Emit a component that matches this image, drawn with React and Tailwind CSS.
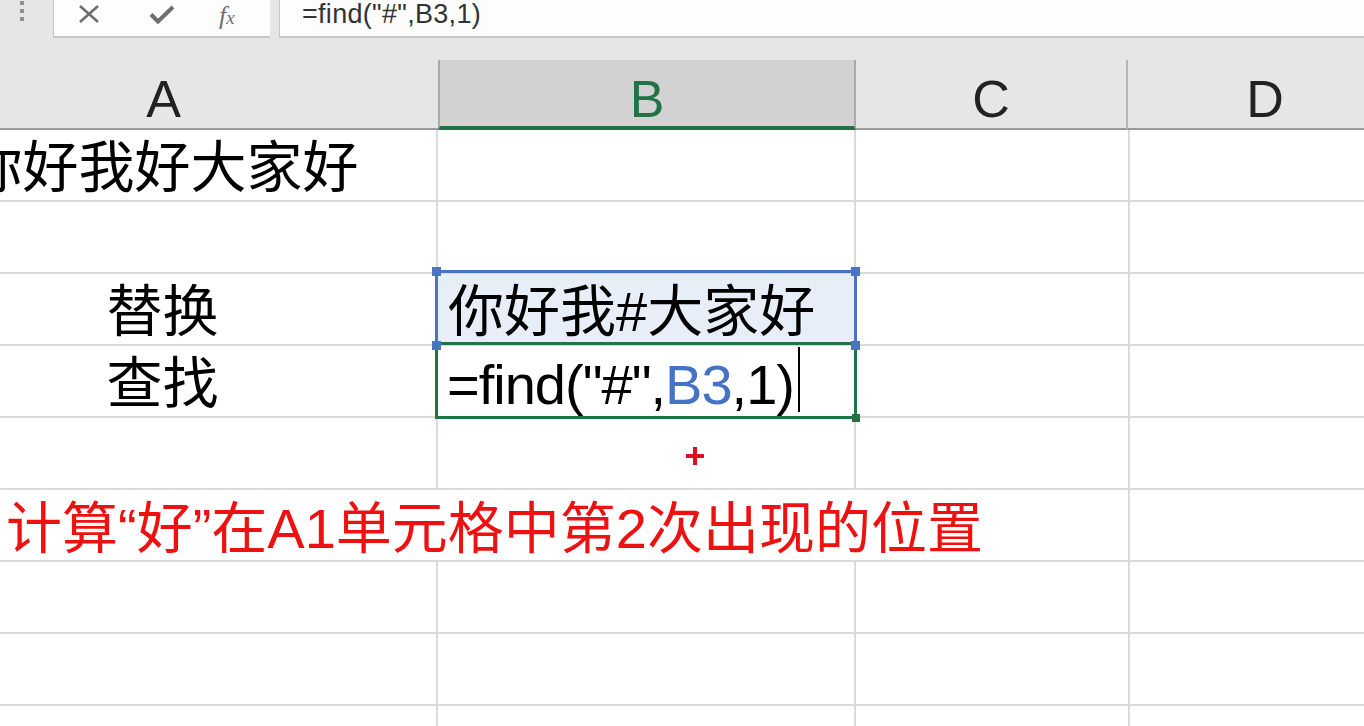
import React from "react";

const GRID = "border-[#dadada]";

function Cell({ w, className = "", children }) {
  return (
    <div
      className={`flex h-[72px] shrink-0 border-b-2 border-r-2 ${GRID} ${w} ${className}`}
    >
      {children}
    </div>
  );
}

function EmptyRow() {
  return (
    <div className="flex">
      <Cell w="w-[549px]" />
      <Cell w="w-[418px]" />
      <Cell w="w-[274px]" />
      <Cell w="w-[274px]" />
    </div>
  );
}

export default function App() {
  return (
    <div className="relative h-[726px] w-[1364px] overflow-hidden bg-white font-['Liberation_Sans','Noto_Sans_CJK_SC',sans-serif] text-black">
      {/* formula bar */}
      <div className="flex h-[60px] items-start bg-[#e6e6e6]">
        <div className="flex w-[53px] shrink-0 flex-col gap-[4px] pl-[20px] pt-[1px]">
          <span className="block h-[4px] w-[4px] bg-[#8f8f8f]" />
          <span className="block h-[4px] w-[4px] bg-[#8f8f8f]" />
          <span className="block h-[4px] w-[4px] bg-[#8f8f8f]" />
        </div>
        <div className="flex h-[38px] w-[217px] shrink-0 items-start border-b-2 border-l border-[#c6c6c6] bg-[#fdfdfd]">
          <svg className="ml-[24px] mt-[5px]" width="22" height="18" viewBox="0 0 22 18">
            <path d="M2 1 L20 17 M20 1 L2 17" stroke="#6e6e6e" strokeWidth="2.6" fill="none" />
          </svg>
          <svg className="ml-[49px] mt-[5px]" width="26" height="19" viewBox="0 0 26 19">
            <path d="M2 9.5 L9 16.5 L24 2" stroke="#6e6e6e" strokeWidth="4" fill="none" strokeLinejoin="miter" />
          </svg>
          <span className="ml-[44px] mt-[2px] font-['Liberation_Serif',serif] text-[26px] italic leading-[1.1] text-[#6e6e6e]">
            f<span className="text-[19px]">x</span>
          </span>
        </div>
        <div className="w-[9px] shrink-0" />
        <div className="flex h-[38px] flex-1 items-start border-b-2 border-l border-[#c6c6c6] bg-[#fdfdfd] pl-[22px]">
          <span className="mt-[1px] text-[27px] leading-none tracking-[0.3px] text-[#333333]">=find("#",B3,1)</span>
        </div>
      </div>

      {/* sheet */}
      <div className="ml-[-111px]">
        {/* column headers */}
        <div className="flex h-[70px]">
          <div className="flex w-[549px] shrink-0 items-center justify-center border-b-2 border-b-[#9a9a9a] bg-[#e6e6e6] text-[52px] leading-none text-[#222222]">
            <span className="translate-y-[5px]">A</span>
          </div>
          <div className="flex w-[418px] shrink-0 items-center justify-center border-x-2 border-b-4 border-x-[#ababab] border-b-[#217346] bg-[#d2d2d2] text-[52px] leading-none text-[#217346]">
            <span className="translate-y-[6px]">B</span>
          </div>
          <div className="flex w-[272px] shrink-0 items-center justify-center border-b-2 border-r-2 border-b-[#9a9a9a] border-r-[#b8b8b8] bg-[#e6e6e6] text-[52px] leading-none text-[#222222]">
            <span className="translate-y-[5px]">C</span>
          </div>
          <div className="flex w-[274px] shrink-0 items-center justify-center border-b-2 border-b-[#9a9a9a] bg-[#e6e6e6] text-[52px] leading-none text-[#222222]">
            <span className="translate-y-[5px]">D</span>
          </div>
        </div>

        {/* row 1 */}
        <div className="flex">
          <Cell w="w-[549px]" className="items-center justify-center whitespace-nowrap text-[56px] leading-none">
            <span className="translate-y-[3px]">你好我好大家好</span>
          </Cell>
          <Cell w="w-[418px]" />
          <Cell w="w-[274px]" />
          <Cell w="w-[274px]" />
        </div>

        {/* row 2 */}
        <EmptyRow />

        {/* row 3 */}
        <div className="flex">
          <Cell w="w-[549px]" className="items-center justify-center text-[56px] leading-none">
            <span className="translate-y-[3px]">替换</span>
          </Cell>
          <Cell w="w-[418px]" className="relative items-center bg-[#e8eef8] pl-[10px] text-[56px] leading-none">
            <span className="translate-y-[3px] whitespace-nowrap">你好我#大家好</span>
            <div className="pointer-events-none absolute -bottom-[2px] -left-[3px] -right-[3px] -top-[4px] z-20 border-[3px] border-b-0 border-[#4a74c0]" />
            <span className="absolute -left-[6px] -top-[7px] z-30 h-[9px] w-[9px] bg-[#4a74c0]" />
            <span className="absolute -right-[6px] -top-[7px] z-30 h-[9px] w-[9px] bg-[#4a74c0]" />
            <span className="absolute -bottom-[6px] -left-[6px] z-30 h-[9px] w-[9px] bg-[#4a74c0]" />
            <span className="absolute -bottom-[6px] -right-[6px] z-30 h-[9px] w-[9px] bg-[#4a74c0]" />
          </Cell>
          <Cell w="w-[274px]" />
          <Cell w="w-[274px]" />
        </div>

        {/* row 4 */}
        <div className="flex">
          <Cell w="w-[549px]" className="items-center justify-center text-[56px] leading-none">
            <span className="translate-y-[3px]">查找</span>
          </Cell>
          <Cell w="w-[418px]" className="relative items-center pl-[9px] text-[56px] leading-none">
            <span className="translate-y-[4px] whitespace-nowrap tracking-[-1px]">
              =find("#",<span className="text-[#4472c4]">B3</span>,1)
            </span>
            <span className="ml-[4px] h-[65px] w-[2px] -translate-y-[2px] bg-black" />
            <div className="pointer-events-none absolute -bottom-[3px] -left-[3px] -right-[3px] -top-[4px] z-10 border-[3px] border-[#217346]" />
            <span className="absolute -bottom-[6px] -right-[6px] z-10 h-[8px] w-[8px] bg-[#217346]" />
          </Cell>
          <Cell w="w-[274px]" />
          <Cell w="w-[274px]" />
        </div>

        {/* row 5 */}
        <EmptyRow />

        {/* row 6 */}
        <div className="flex">
          <Cell w="w-[1241px]" className="items-center whitespace-nowrap pl-[117px] text-[56px] leading-none text-[#ee1111]">
            <span className="translate-y-[4px]">计算“好”在A1单元格中第2次出现的位置</span>
          </Cell>
          <Cell w="w-[274px]" />
        </div>

        <EmptyRow />
        <EmptyRow />
        <EmptyRow />
      </div>

      {/* mouse cursor cross */}
      <div className="absolute left-[686px] top-[447px] h-[18px] w-[18px]">
        <span className="absolute left-0 top-[7px] h-[4px] w-full bg-[#d81020]" />
        <span className="absolute left-[7px] top-0 h-full w-[4px] bg-[#d81020]" />
      </div>
    </div>
  );
}
